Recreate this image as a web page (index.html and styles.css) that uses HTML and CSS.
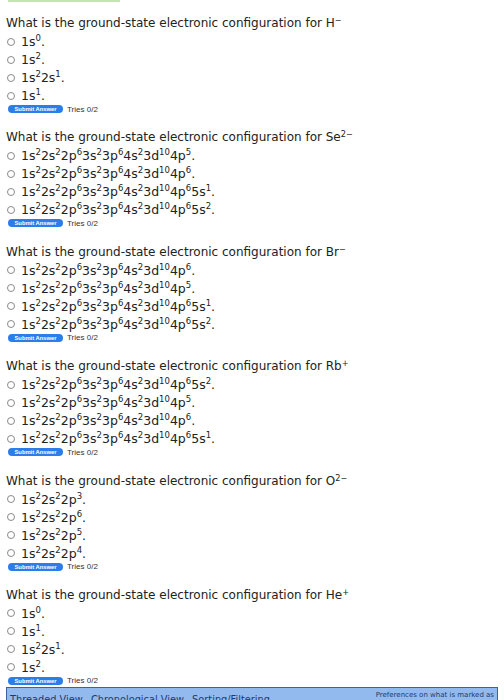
FILE: index.html
```html
<!DOCTYPE html>
<html>
<head>
<meta charset="utf-8">
<link rel="stylesheet" href="styles.css">
</head>
<body>
<div class="topbar"></div>

<div class="problem">
  <div class="question">What is the ground-state electronic configuration for H<sup>−</sup></div>
  <ul class="options">
    <li><span class="radio"></span><span class="opt">1s<sup>0</sup>.</span></li>
    <li><span class="radio"></span><span class="opt">1s<sup>2</sup>.</span></li>
    <li><span class="radio"></span><span class="opt">1s<sup>2</sup>2s<sup>1</sup>.</span></li>
    <li><span class="radio"></span><span class="opt">1s<sup>1</sup>.</span></li>
  </ul>
  <div class="submit-row"><span class="btn">Submit Answer</span><span class="tries">Tries 0/2</span></div>
</div>

<div class="problem">
  <div class="question">What is the ground-state electronic configuration for Se<sup>2−</sup></div>
  <ul class="options">
    <li><span class="radio"></span><span class="opt">1s<sup>2</sup>2s<sup>2</sup>2p<sup>6</sup>3s<sup>2</sup>3p<sup>6</sup>4s<sup>2</sup>3d<sup>10</sup>4p<sup>5</sup>.</span></li>
    <li><span class="radio"></span><span class="opt">1s<sup>2</sup>2s<sup>2</sup>2p<sup>6</sup>3s<sup>2</sup>3p<sup>6</sup>4s<sup>2</sup>3d<sup>10</sup>4p<sup>6</sup>.</span></li>
    <li><span class="radio"></span><span class="opt">1s<sup>2</sup>2s<sup>2</sup>2p<sup>6</sup>3s<sup>2</sup>3p<sup>6</sup>4s<sup>2</sup>3d<sup>10</sup>4p<sup>6</sup>5s<sup>1</sup>.</span></li>
    <li><span class="radio"></span><span class="opt">1s<sup>2</sup>2s<sup>2</sup>2p<sup>6</sup>3s<sup>2</sup>3p<sup>6</sup>4s<sup>2</sup>3d<sup>10</sup>4p<sup>6</sup>5s<sup>2</sup>.</span></li>
  </ul>
  <div class="submit-row"><span class="btn">Submit Answer</span><span class="tries">Tries 0/2</span></div>
</div>

<div class="problem">
  <div class="question">What is the ground-state electronic configuration for Br<sup>−</sup></div>
  <ul class="options">
    <li><span class="radio"></span><span class="opt">1s<sup>2</sup>2s<sup>2</sup>2p<sup>6</sup>3s<sup>2</sup>3p<sup>6</sup>4s<sup>2</sup>3d<sup>10</sup>4p<sup>6</sup>.</span></li>
    <li><span class="radio"></span><span class="opt">1s<sup>2</sup>2s<sup>2</sup>2p<sup>6</sup>3s<sup>2</sup>3p<sup>6</sup>4s<sup>2</sup>3d<sup>10</sup>4p<sup>5</sup>.</span></li>
    <li><span class="radio"></span><span class="opt">1s<sup>2</sup>2s<sup>2</sup>2p<sup>6</sup>3s<sup>2</sup>3p<sup>6</sup>4s<sup>2</sup>3d<sup>10</sup>4p<sup>6</sup>5s<sup>1</sup>.</span></li>
    <li><span class="radio"></span><span class="opt">1s<sup>2</sup>2s<sup>2</sup>2p<sup>6</sup>3s<sup>2</sup>3p<sup>6</sup>4s<sup>2</sup>3d<sup>10</sup>4p<sup>6</sup>5s<sup>2</sup>.</span></li>
  </ul>
  <div class="submit-row"><span class="btn">Submit Answer</span><span class="tries">Tries 0/2</span></div>
</div>

<div class="problem">
  <div class="question">What is the ground-state electronic configuration for Rb<sup>+</sup></div>
  <ul class="options">
    <li><span class="radio"></span><span class="opt">1s<sup>2</sup>2s<sup>2</sup>2p<sup>6</sup>3s<sup>2</sup>3p<sup>6</sup>4s<sup>2</sup>3d<sup>10</sup>4p<sup>6</sup>5s<sup>2</sup>.</span></li>
    <li><span class="radio"></span><span class="opt">1s<sup>2</sup>2s<sup>2</sup>2p<sup>6</sup>3s<sup>2</sup>3p<sup>6</sup>4s<sup>2</sup>3d<sup>10</sup>4p<sup>5</sup>.</span></li>
    <li><span class="radio"></span><span class="opt">1s<sup>2</sup>2s<sup>2</sup>2p<sup>6</sup>3s<sup>2</sup>3p<sup>6</sup>4s<sup>2</sup>3d<sup>10</sup>4p<sup>6</sup>.</span></li>
    <li><span class="radio"></span><span class="opt">1s<sup>2</sup>2s<sup>2</sup>2p<sup>6</sup>3s<sup>2</sup>3p<sup>6</sup>4s<sup>2</sup>3d<sup>10</sup>4p<sup>6</sup>5s<sup>1</sup>.</span></li>
  </ul>
  <div class="submit-row"><span class="btn">Submit Answer</span><span class="tries">Tries 0/2</span></div>
</div>

<div class="problem">
  <div class="question">What is the ground-state electronic configuration for O<sup>2−</sup></div>
  <ul class="options">
    <li><span class="radio"></span><span class="opt">1s<sup>2</sup>2s<sup>2</sup>2p<sup>3</sup>.</span></li>
    <li><span class="radio"></span><span class="opt">1s<sup>2</sup>2s<sup>2</sup>2p<sup>6</sup>.</span></li>
    <li><span class="radio"></span><span class="opt">1s<sup>2</sup>2s<sup>2</sup>2p<sup>5</sup>.</span></li>
    <li><span class="radio"></span><span class="opt">1s<sup>2</sup>2s<sup>2</sup>2p<sup>4</sup>.</span></li>
  </ul>
  <div class="submit-row"><span class="btn">Submit Answer</span><span class="tries">Tries 0/2</span></div>
</div>

<div class="problem">
  <div class="question">What is the ground-state electronic configuration for He<sup>+</sup></div>
  <ul class="options">
    <li><span class="radio"></span><span class="opt">1s<sup>0</sup>.</span></li>
    <li><span class="radio"></span><span class="opt">1s<sup>1</sup>.</span></li>
    <li><span class="radio"></span><span class="opt">1s<sup>2</sup>2s<sup>1</sup>.</span></li>
    <li><span class="radio"></span><span class="opt">1s<sup>2</sup>.</span></li>
  </ul>
  <div class="submit-row"><span class="btn">Submit Answer</span><span class="tries">Tries 0/2</span></div>
</div>

<div class="forum-bar">
  <div class="views">
    <span>Threaded View</span>
    <span>Chronological View</span>
    <span>Sorting/Filtering</span>
  </div>
  <div class="prefs">Preferences on what is marked as</div>
</div>
</body>
</html>
```

FILE: styles.css
```css
html, body {
  margin: 0;
  padding: 0;
  background: #ffffff;
}
body {
  font-family: "DejaVu Sans", Verdana, sans-serif;
  color: #222222;
  padding: 0 6px;
}
.topbar {
  margin-left: 2px;
  width: 112px;
  height: 0;
  border-bottom: 2px solid #c4e4b4;
}
.problem {
  margin-top: 13px;
}
.problem + .problem {
  margin-top: 15.4px;
}
.question {
  font-size: 12px;
  line-height: 16px;
  height: 16px;
  white-space: nowrap;
}
.options {
  list-style: none;
  margin: 1px 0 0 0;
  padding: 0;
}
.options li {
  font-size: 12.5px;
  line-height: 18px;
  height: 18px;
  display: flex;
  align-items: center;
}
.opt {
  display: block;
  white-space: nowrap;
  padding-top: 2px;
}
sup {
  font-size: 0.68em;
  line-height: 0;
  vertical-align: 0.55em;
}
.radio {
  width: 8px;
  height: 8px;
  border: 1px solid #8a8a8a;
  border-radius: 50%;
  margin: 1px 6px 0 1px;
  flex: none;
  box-sizing: border-box;
}
.submit-row {
  display: flex;
  align-items: center;
  height: 10px;
  gap: 4px;
}
.btn {
  background: #2b7de9;
  color: #ffffff;
  font-family: "Liberation Sans", Arial, sans-serif;
  font-size: 5.8px;
  font-weight: bold;
  border-radius: 5px;
  height: 8px;
  line-height: 8px;
  width: 55px;
  white-space: nowrap;
  box-sizing: border-box;
  text-align: center;
  margin-left: 2px;
}
.tries {
  font-family: "Liberation Sans", Arial, sans-serif;
  font-size: 8px;
  color: #333333;
}
.forum-bar {
  margin-top: 1px;
  width: 492px;
  height: 30px;
  background: #92baef;
  border: 1px solid #3f6296;
  box-sizing: border-box;
  display: flex;
  justify-content: space-between;
  align-items: flex-start;
  padding: 3px 3px 0 3px;
}
.views {
  display: flex;
  gap: 8px;
  font-size: 9.8px;
  color: #1d3b6b;
  padding-top: 3px;
}
.prefs {
  font-size: 7px;
  color: #1d3b6b;
}
```
